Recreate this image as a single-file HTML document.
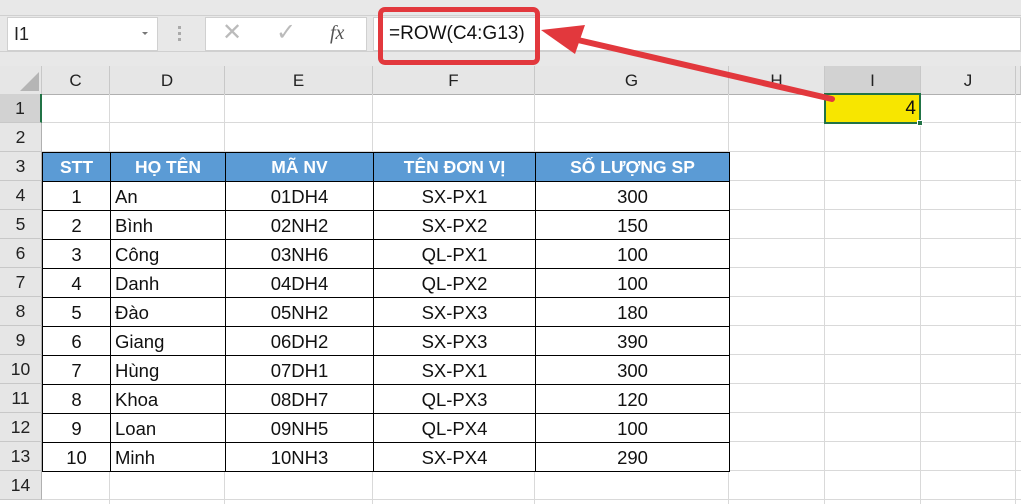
<!DOCTYPE html>
<html><head><meta charset="utf-8"><style>
*{margin:0;padding:0;box-sizing:border-box}
html,body{width:1021px;height:504px;overflow:hidden}
body{background:#fff;font-family:"Liberation Sans",sans-serif;position:relative}
.abs{position:absolute}
.grid{position:absolute;left:42px;top:94px;width:979px;height:410px;background:repeating-linear-gradient(to bottom,transparent 0 28px,#d9d9d9 28px 29px)}
.v{position:absolute;top:94px;height:410px;width:1px;background:#d9d9d9}
.ch{position:absolute;top:66px;height:29px;background:#e6e6e6;border-right:1px solid #c8c8c8;border-bottom:1px solid #b0b0b0;font-size:17px;color:#222;text-align:center;line-height:29px}
.rh{position:absolute;left:0;width:42px;height:29px;background:#e6e6e6;border-bottom:1px solid #c8c8c8;border-right:1px solid #b0b0b0;font-size:17.5px;color:#222;text-align:center;line-height:29px}
table{position:absolute;left:42px;top:152px;border-collapse:collapse;font-size:18.5px;color:#111;background:#fff}
td{border:1px solid #000;height:29px;padding:0;text-align:center;line-height:27px}
td.l{text-align:left;padding-left:4px}
tr.h td{background:#5b9bd5;color:#fff;font-weight:bold;font-size:17.5px}
</style></head><body>
<div class="abs" style="left:0;top:0;width:1021px;height:66px;background:#e8e8e8"></div>
<div class="abs" style="left:0;top:15px;width:1021px;height:1px;background:#d0d0d0"></div>
<div class="abs" style="left:0;top:51px;width:1021px;height:1px;background:#d0d0d0"></div>
<div class="abs" style="left:7px;top:17px;width:151px;height:34px;background:#fff;border:1px solid #d0d0d0;font-size:18px;line-height:32px;padding-left:6px;color:#222">I1</div>
<div class="abs" style="left:142px;top:32px;width:0;height:0;border-left:3px solid transparent;border-right:3px solid transparent;border-top:3px solid #777"></div>
<div class="abs" style="left:178px;top:26px;width:3px;height:3px;background:#aaa;box-shadow:0 6px 0 #aaa,0 12px 0 #aaa"></div>
<div class="abs" style="left:205px;top:17px;width:162px;height:34px;background:#fff;border:1px solid #d0d0d0"></div>
<div class="abs" style="left:222px;top:18px;font-size:24px;color:#bbb;line-height:30px">✕</div>
<div class="abs" style="left:276px;top:18px;font-size:24px;color:#bbb;line-height:30px">✓</div>
<div class="abs" style="left:330px;top:18px;font-size:20px;color:#555;font-family:'Liberation Serif',serif;font-style:italic;line-height:30px">fx</div>
<div class="abs" style="left:373px;top:17px;width:648px;height:34px;background:#fff;border:1px solid #d0d0d0"></div>
<div class="abs" style="left:389px;top:17px;font-size:19px;line-height:34px;color:#111">=ROW(C4:G13)</div>
<div class="abs" style="left:378px;top:7px;width:162px;height:58px;border:5px solid #e2383d;border-radius:7px"></div>

<div class="ch" style="left:0;width:42px"></div>
<div class="abs" style="left:20px;top:72px;width:0;height:0;border-left:19px solid transparent;border-bottom:19px solid #b5b5b5"></div>
<div class="ch" style="left:42px;width:68px">C</div>
<div class="ch" style="left:110px;width:115px">D</div>
<div class="ch" style="left:225px;width:148px">E</div>
<div class="ch" style="left:373px;width:162px">F</div>
<div class="ch" style="left:535px;width:194px">G</div>
<div class="ch" style="left:729px;width:96px">H</div>
<div class="ch" style="left:825px;width:96px;background:#d2d2d2;border-bottom:2px solid #217346">I</div>
<div class="ch" style="left:921px;width:95px">J</div>
<div class="ch" style="left:1016px;width:5px"></div>

<div class="grid"></div>
<div class="v" style="left:109px"></div><div class="v" style="left:224px"></div><div class="v" style="left:372px"></div><div class="v" style="left:534px"></div><div class="v" style="left:728px"></div><div class="v" style="left:824px"></div><div class="v" style="left:920px"></div><div class="v" style="left:1015px"></div>

<div class="rh" style="top:94px;background:#d2d2d2;border-right:2px solid #217346">1</div>
<div class="rh" style="top:123px">2</div>
<div class="rh" style="top:152px">3</div>
<div class="rh" style="top:181px">4</div>
<div class="rh" style="top:210px">5</div>
<div class="rh" style="top:239px">6</div>
<div class="rh" style="top:268px">7</div>
<div class="rh" style="top:297px">8</div>
<div class="rh" style="top:326px">9</div>
<div class="rh" style="top:355px">10</div>
<div class="rh" style="top:384px">11</div>
<div class="rh" style="top:413px">12</div>
<div class="rh" style="top:442px">13</div>
<div class="rh" style="top:471px">14</div>

<div class="abs" style="left:824px;top:93px;width:97px;height:31px;background:#f7e600;border:2px solid #217346;font-size:19px;text-align:right;line-height:27px;padding-right:3px;color:#111">4</div>
<div class="abs" style="left:917px;top:120px;width:6px;height:6px;background:#217346;border:1px solid #fff"></div>

<table>
<colgroup><col style="width:68px"><col style="width:115px"><col style="width:148px"><col style="width:162px"><col style="width:194px"></colgroup>
<tr class="h"><td>STT</td><td>HỌ TÊN</td><td>MÃ NV</td><td>TÊN ĐƠN VỊ</td><td>SỐ LƯỢNG SP</td></tr>
<tr><td>1</td><td class="l">An</td><td>01DH4</td><td>SX-PX1</td><td>300</td></tr>
<tr><td>2</td><td class="l">Bình</td><td>02NH2</td><td>SX-PX2</td><td>150</td></tr>
<tr><td>3</td><td class="l">Công</td><td>03NH6</td><td>QL-PX1</td><td>100</td></tr>
<tr><td>4</td><td class="l">Danh</td><td>04DH4</td><td>QL-PX2</td><td>100</td></tr>
<tr><td>5</td><td class="l">Đào</td><td>05NH2</td><td>SX-PX3</td><td>180</td></tr>
<tr><td>6</td><td class="l">Giang</td><td>06DH2</td><td>SX-PX3</td><td>390</td></tr>
<tr><td>7</td><td class="l">Hùng</td><td>07DH1</td><td>SX-PX1</td><td>300</td></tr>
<tr><td>8</td><td class="l">Khoa</td><td>08DH7</td><td>QL-PX3</td><td>120</td></tr>
<tr><td>9</td><td class="l">Loan</td><td>09NH5</td><td>QL-PX4</td><td>100</td></tr>
<tr><td>10</td><td class="l">Minh</td><td>10NH3</td><td>SX-PX4</td><td>290</td></tr>
</table>

<svg class="abs" style="left:0;top:0" width="1021" height="504">
<line x1="832" y1="99" x2="565" y2="37" stroke="#e2383d" stroke-width="6" stroke-linecap="round"/>
<polygon points="541,30 585,25 575,54" fill="#e2383d"/>
</svg>
</body></html>
